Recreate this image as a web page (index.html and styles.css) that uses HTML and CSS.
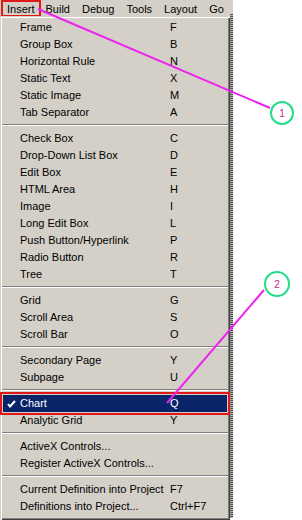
FILE: index.html
```html
<!DOCTYPE html>
<html lang="en">
<head>
  <meta charset="UTF-8">
  <title>Insert menu</title>
  <link rel="stylesheet" href="styles.css">
</head>
<body>
  <div class="screen">
    <!-- menu bar -->
    <div class="menubar">
      <span class="menubar-item boxed">Insert</span>
      <span class="menubar-item">Build</span>
      <span class="menubar-item">Debug</span>
      <span class="menubar-item">Tools</span>
      <span class="menubar-item">Layout</span>
      <span class="menubar-item">Go</span>
      <span class="menubar-item">W</span>
    </div>

    <div class="below">
      <!-- dropdown -->
      <div class="menu">
        <div class="row"><span>Frame</span><span>F</span></div>
        <div class="row"><span>Group Box</span><span>B</span></div>
        <div class="row"><span>Horizontal Rule</span><span>N</span></div>
        <div class="row"><span>Static Text</span><span>X</span></div>
        <div class="row"><span>Static Image</span><span>M</span></div>
        <div class="row"><span>Tab Separator</span><span>A</span></div>
        <div class="sep"></div>
        <div class="row"><span>Check Box</span><span>C</span></div>
        <div class="row"><span>Drop-Down List Box</span><span>D</span></div>
        <div class="row"><span>Edit Box</span><span>E</span></div>
        <div class="row"><span>HTML Area</span><span>H</span></div>
        <div class="row"><span>Image</span><span>I</span></div>
        <div class="row"><span>Long Edit Box</span><span>L</span></div>
        <div class="row"><span>Push Button/Hyperlink</span><span>P</span></div>
        <div class="row"><span>Radio Button</span><span>R</span></div>
        <div class="row"><span>Tree</span><span>T</span></div>
        <div class="sep"></div>
        <div class="row"><span>Grid</span><span>G</span></div>
        <div class="row"><span>Scroll Area</span><span>S</span></div>
        <div class="row"><span>Scroll Bar</span><span>O</span></div>
        <div class="sep"></div>
        <div class="row"><span>Secondary Page</span><span>Y</span></div>
        <div class="row"><span>Subpage</span><span>U</span></div>
        <div class="sep"></div>
        <div class="row active">
          <svg class="check" width="9" height="8" viewBox="0 0 9 8"><path d="M1 4 L3 6.5 L8 1" fill="none" stroke="#fff" stroke-width="2"/></svg>
          <span>Chart</span><span>Q</span>
        </div>
        <div class="row"><span>Analytic Grid</span><span>Y</span></div>
        <div class="sep"></div>
        <div class="row"><span>ActiveX Controls...</span><span></span></div>
        <div class="row"><span>Register ActiveX Controls...</span><span></span></div>
        <div class="sep"></div>
        <div class="row"><span>Current Definition into Project</span><span>F7</span></div>
        <div class="row"><span>Definitions into Project...</span><span>Ctrl+F7</span></div>
      </div>
      <div class="edge"></div>
    </div>

    <!-- callouts drawn over the screenshot -->
    <svg class="notes" width="302" height="520" viewBox="0 0 302 520">
      <line x1="38" y1="9" x2="270" y2="108" stroke="#ee22ee" stroke-width="2"/>
      <circle cx="282" cy="113" r="11" fill="#fff" stroke="#22dd88" stroke-width="2"/>
      <text x="282" y="117" class="num">1</text>
      <line x1="264" y1="290" x2="167" y2="403" stroke="#ee22ee" stroke-width="2"/>
      <circle cx="277" cy="284" r="12" fill="#fff" stroke="#22dd88" stroke-width="2"/>
      <text x="277" y="288" class="num">2</text>
    </svg>
  </div>
</body>
</html>
```
FILE: styles.css
```css
* {
  margin: 0;
  padding: 0;
  box-sizing: border-box;
}
body {
  width: 302px;
  height: 520px;
  background: #fff;
  font-family: 'Liberation Sans', Arial, sans-serif;
  font-size: 11px;
  color: #000;
  overflow: hidden;
}

.screen {
  position: relative;
  width: 302px;
  height: 520px;
}

/* menu bar */
.menubar {
  display: flex;
  width: 233px;
  height: 16px;
  background: #d4d0c8;
  overflow: hidden;
  white-space: nowrap;
  padding-left: 1px;
}
.menubar-item {
  padding: 1px 6px 0;
  line-height: 14px;
  margin-top: 1px;
  height: 15px;
}
.menubar-item:last-child {
  padding-left: 7px;
}
.menubar-item.boxed {
  outline: 2px solid #e01818;
  outline-offset: -1px;
  padding: 1px 5px 0 5px;
  margin-left: 1px;
  margin-right: 0;
}

.below {
  display: flex;
  align-items: flex-start;
}

/* dropdown */
.menu {
  width: 230px;
  background: #d4d0c8;
  padding: 3px 3px 5px 3px;
  box-shadow: inset 1px 1px 0 #d4d0c8, inset 2px 2px 0 #fff,
              inset -1px -1px 0 #404040, inset -2px -2px 0 #808080;
}
.row {
  position: relative;
  display: grid;
  grid-template-columns: 150px auto;
  height: 17px;
  line-height: 17px;
  padding-left: 17px;
  white-space: nowrap;
}
.row.active {
  background: #0a246a;
  color: #fff;
  outline: 2px solid #e01818;
  outline-offset: 1px;
}
.check {
  position: absolute;
  left: 4px;
  top: 5px;
}
.sep {
  height: 9px;
  margin: 0 -1px;
  border-top: 3px solid transparent;
  border-bottom: 4px solid transparent;
  background: linear-gradient(#808080 0 1px, #fff 1px 2px);
  background-clip: padding-box;
}

/* window edge behind the menu */
.edge {
  width: 3px;
  height: 504px;
  margin-top: -2px;
  background: repeating-linear-gradient(#444 0 1px, #bbb 1px 2px);
  border-left: 1px solid #888;
}

.notes {
  position: absolute;
  left: 0;
  top: 0;
  pointer-events: none;
}
.notes .num {
  font-size: 10px;
  fill: #cc2288;
  text-anchor: middle;
}
```
